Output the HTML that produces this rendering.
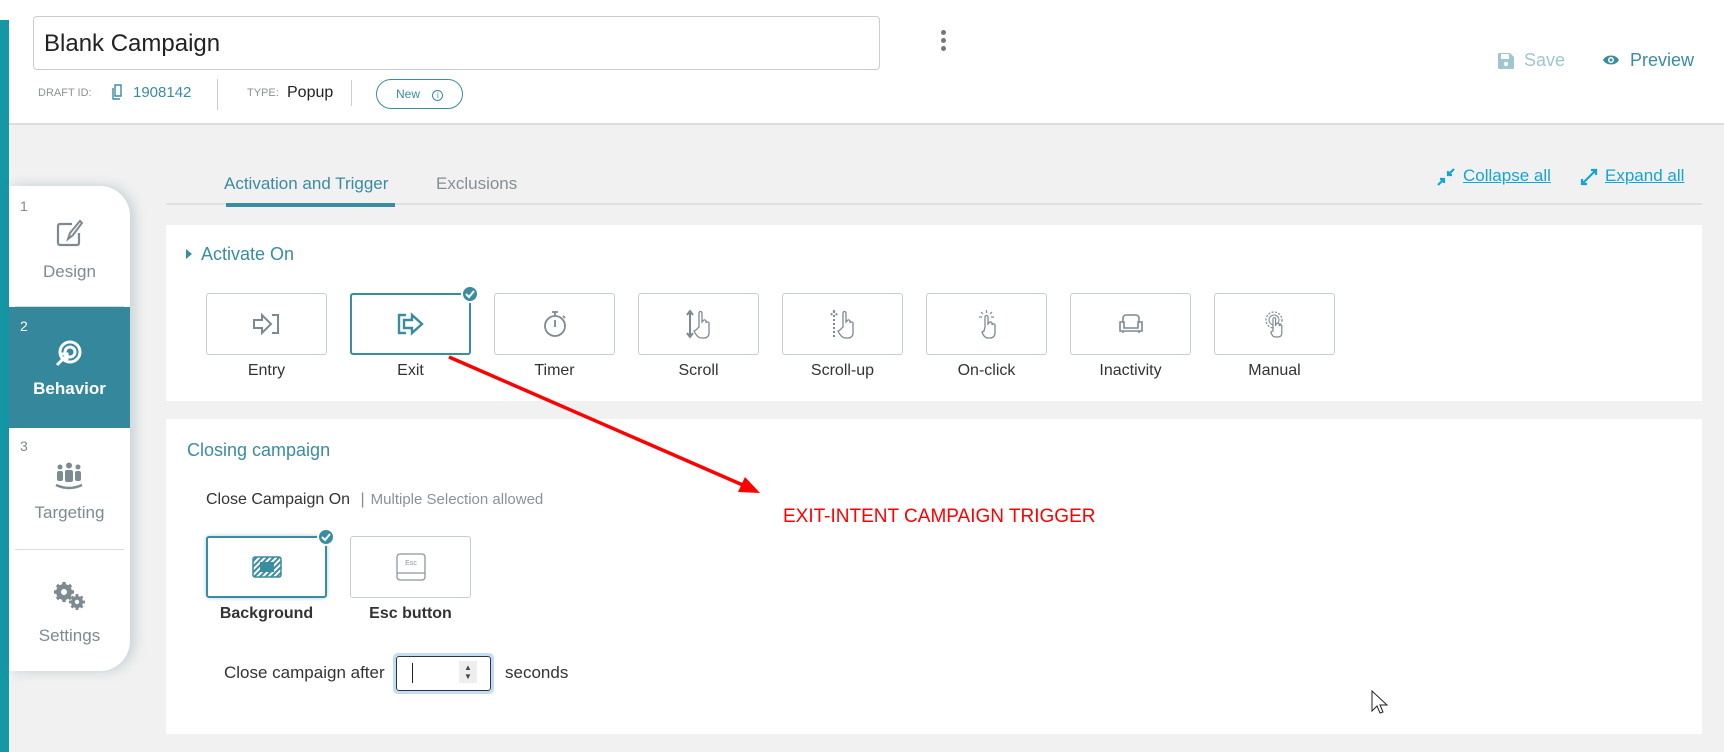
<!DOCTYPE html>
<html><head><meta charset="utf-8"><style>
*{box-sizing:border-box;margin:0;padding:0}
body{width:1724px;height:752px;overflow:hidden;background:#f1f1f1;font-family:"Liberation Sans",sans-serif;position:relative;color:#333}
.abs{position:absolute}
.header{left:0;top:0;width:1724px;height:125px;background:#fff;border-bottom:2px solid #d9dde0}
.strip{left:0;top:20px;width:9px;height:732px;background:#1597a6}
.title{left:33px;top:16px;width:847px;height:54px;border:1px solid #c9cdd0;border-radius:4px;font-size:24px;padding:13px 10px;color:#222}
.sm{font-size:11px;color:#8a9398}
.teal{color:#3a8ca0}
.card{left:9px;top:186px;width:121px;height:485px;background:#fff;border-radius:0 30px 30px 0;box-shadow:4px 0 12px rgba(60,110,130,.25);overflow:hidden}
.nav{position:absolute;left:0;width:121px;text-align:center;font-size:17px;color:#7c8a92}
.num{position:absolute;left:11px;font-size:14px;color:#7c8a92}
.panel{background:#fff;left:166px;width:1536px}
.box{position:absolute;width:121px;height:62px;border:1px solid #c5ced3;border-radius:3px;background:#fff}
.box.sel{border:2px solid #3a8ca0}
.box svg{position:absolute;left:50%;top:50%;transform:translate(-50%,-50%)}
.lbl{position:absolute;width:121px;text-align:center;font-size:16px;color:#333}
.chk{position:absolute;right:-10px;top:-10px;width:18px;height:18px;border-radius:50%;background:#3a8ca0;border:2px solid #fff}
</style></head><body>
<div class="abs header"></div>
<div class="abs strip"></div>
<div class="abs title">Blank Campaign</div>
<div class="abs" style="left:941px;top:30px;width:5px">
<div style="width:5px;height:5px;border-radius:50%;background:#777;margin-bottom:3px"></div>
<div style="width:5px;height:5px;border-radius:50%;background:#777;margin-bottom:3px"></div>
<div style="width:5px;height:5px;border-radius:50%;background:#777"></div></div>
<div class="abs sm" style="left:38px;top:87px">DRAFT ID:</div>
<svg class="abs" style="left:112px;top:84px" width="12" height="16" viewBox="0 0 12 16"><path d="M3 1h6v11H3zM1 4v11h7" fill="none" stroke="#3a8ca0" stroke-width="1.4"/></svg>
<div class="abs teal" style="left:133px;top:84px;font-size:15px">1908142</div>
<div class="abs" style="left:217px;top:79px;width:1px;height:31px;background:#ccc"></div>
<div class="abs sm" style="left:247px;top:87px">TYPE:</div>
<div class="abs" style="left:287px;top:84px;font-size:16px;color:#222">Popup</div>
<div class="abs" style="left:351px;top:80px;width:1px;height:26px;background:#ccc"></div>
<div class="abs teal" style="left:376px;top:79px;width:87px;height:30px;border:1.5px solid #3a8ca0;border-radius:15px;font-size:12px;padding-top:7px;padding-left:19px">New <span style="display:inline-block;width:11px;height:11px;border:1.3px solid #3a8ca0;border-radius:50%;font-size:8px;text-align:center;line-height:9px;margin-left:9px">i</span></div>
<svg class="abs" style="left:1497px;top:52px" width="18" height="18" viewBox="0 0 18 18"><path d="M1 2a1 1 0 0 1 1-1h11l4 4v11a1 1 0 0 1-1 1H2a1 1 0 0 1-1-1z" fill="#9fc6d1"/><rect x="4" y="2" width="8" height="5" fill="#fff"/><circle cx="9" cy="12" r="2.2" fill="#fff"/></svg>
<div class="abs" style="left:1524px;top:50px;font-size:18px;color:#9fc6d1">Save</div>
<svg class="abs" style="left:1602px;top:54px" width="18" height="12" viewBox="0 0 18 12"><path d="M1 6C4 0 14 0 17 6C14 12 4 12 1 6z" fill="#3a8ca0"/><circle cx="9" cy="6" r="3" fill="#fff"/><circle cx="9" cy="6" r="1.5" fill="#3a8ca0"/></svg>
<div class="abs teal" style="left:1630px;top:50px;font-size:18px">Preview</div>

<div class="abs card">
<div class="num" style="top:12px">1</div>
<svg class="abs" style="left:45px;top:33px" width="30" height="30" viewBox="0 0 30 30"><path d="M18 5H6a2 2 0 0 0-2 2v17a2 2 0 0 0 2 2h17a2 2 0 0 0 2-2V14" fill="none" stroke="#7c8a92" stroke-width="2.2"/><path d="M26 2L16 14l-2 6 5-4L28 4z" fill="none" stroke="#7c8a92" stroke-width="2"/></svg>
<div class="nav" style="top:76px">Design</div>
<div class="abs" style="left:6px;top:120px;width:109px;height:2px;background:#d5dde0"></div>
<div class="abs" style="left:0;top:121px;width:121px;height:121px;background:#35879c"></div>
<div class="num" style="top:132px;color:#fff">2</div>
<svg class="abs" style="left:46px;top:153px" width="28" height="28" viewBox="0 0 28 28"><circle cx="15" cy="13" r="10" fill="none" stroke="#fff" stroke-width="3"/><circle cx="15" cy="13" r="5" fill="none" stroke="#fff" stroke-width="3"/><path d="M2 26l9-9M6 15h6v6" stroke="#fff" stroke-width="3" fill="none"/></svg>
<div class="nav" style="top:193px;color:#fff;font-weight:bold">Behavior</div>
<div class="num" style="top:252px">3</div>
<svg class="abs" style="left:45px;top:276px" width="30" height="30" viewBox="0 0 30 30"><circle cx="6" cy="5" r="2.5" fill="#7c8a92"/><circle cx="15" cy="3.5" r="3" fill="#7c8a92"/><circle cx="24" cy="5" r="2.5" fill="#7c8a92"/><rect x="3" y="9" width="6" height="10" rx="2" fill="#7c8a92"/><rect x="11" y="8" width="8" height="12" rx="2" fill="#7c8a92"/><rect x="21" y="9" width="6" height="10" rx="2" fill="#7c8a92"/><path d="M2 23q13 6 26 0" stroke="#7c8a92" stroke-width="2.5" fill="none"/></svg>
<div class="nav" style="top:317px">Targeting</div>
<div class="abs" style="left:6px;top:363px;width:109px;height:1px;background:#d5dde0"></div>
<svg class="abs" style="left:43px;top:395px" width="34" height="30" viewBox="0 0 34 30"><g fill="#7c8a92"><circle cx="12" cy="11" r="8"/><circle cx="25" cy="21" r="6"/></g><g stroke="#7c8a92" stroke-width="3.5"><path d="M12 1v20M2 11h20M5 4l14 14M19 4L5 18"/><path d="M25 13v16M17 21h16M19.5 15.5l11 11M30.5 15.5l-11 11" stroke-width="2.8"/></g><circle cx="12" cy="11" r="3" fill="#fff"/><circle cx="25" cy="21" r="2.2" fill="#fff"/></svg>
<div class="nav" style="top:440px">Settings</div>
</div>

<div class="abs" style="left:166px;top:203px;width:1536px;height:2px;background:#dde0e4"></div>
<div class="abs teal" style="left:224px;top:174px;font-size:17px">Activation and Trigger</div>
<div class="abs" style="left:226px;top:203px;width:169px;height:4px;background:#3a8ca0"></div>
<div class="abs" style="left:436px;top:174px;font-size:17px;color:#858f95">Exclusions</div>
<svg class="abs" style="left:1437px;top:168px" width="18" height="18" viewBox="0 0 18 18"><path d="M17 1l-6 6M11 3v4h4M1 17l6-6M3 11h4v4" stroke="#15a5d4" stroke-width="2.2" fill="none"/></svg>
<div class="abs" style="left:1463px;top:166px;font-size:17px;color:#15a5d4;text-decoration:underline">Collapse all</div>
<svg class="abs" style="left:1580px;top:168px" width="18" height="18" viewBox="0 0 18 18"><path d="M2 16L16 2M11 2h5v5M2 11v5h5" stroke="#15a5d4" stroke-width="2.2" fill="none"/></svg>
<div class="abs" style="left:1605px;top:166px;font-size:17px;color:#15a5d4;text-decoration:underline">Expand all</div>

<div class="abs panel" style="top:225px;height:176px"></div>
<svg class="abs" style="left:186px;top:249px" width="6" height="10"><path d="M0 0l6 5-6 5z" fill="#3a8ca0"/></svg>
<div class="abs teal" style="left:201px;top:244px;font-size:18px">Activate On</div>

<div class="box" style="left:206px;top:293px"><svg width="30" height="24" viewBox="0 0 30 24"><path d="M2 8h8V3l9 9-9 9v-5H2z" fill="none" stroke="#7c8a92" stroke-width="2"/><path d="M20 3h6v18h-6" fill="none" stroke="#7c8a92" stroke-width="2"/></svg></div>
<div class="box sel" style="left:350px;top:293px"><svg width="30" height="24" viewBox="0 0 30 24"><path d="M10 3H3v18h7" fill="none" stroke="#3a8ca0" stroke-width="2.4"/><path d="M8 8h8V3l10 9-10 9v-5H8z" fill="none" stroke="#3a8ca0" stroke-width="2.4"/></svg>
<div class="chk"><svg width="14" height="14" style="left:0;top:0;transform:none;position:absolute" viewBox="0 0 14 14"><path d="M3 7l3 3 5-6" stroke="#fff" stroke-width="2" fill="none"/></svg></div></div>
<div class="box" style="left:494px;top:293px"><svg width="24" height="30" viewBox="0 0 24 30"><circle cx="12" cy="17" r="10" fill="none" stroke="#7c8a92" stroke-width="1.8"/><path d="M12 11v7M9 3h6M12 3v4M20 7l2 2" stroke="#7c8a92" stroke-width="1.8"/></svg></div>
<div class="box" style="left:638px;top:293px"><svg width="30" height="30" viewBox="0 0 30 30"><path d="M6 2v26M3 6l3-4 3 4M3 24l3 4 3-4" stroke="#7c8a92" stroke-width="2" fill="none"/><path d="M15 18V4a1.5 1.5 0 0 1 3 0v9l1-1a1.5 1.5 0 0 1 3 1v1a1.5 1.5 0 0 1 3 1v9c0 3-2 5-5 5h-3c-3 0-5-3-7-7l2-1z" fill="none" stroke="#7c8a92" stroke-width="1.3"/></svg></div>
<div class="box" style="left:782px;top:293px"><svg width="30" height="30" viewBox="0 0 30 30"><path d="M6 28V2M3 6l3-4 3 4" stroke="#7c8a92" stroke-width="2" fill="none" stroke-dasharray="2 2"/><path d="M15 18V4a1.5 1.5 0 0 1 3 0v9l1-1a1.5 1.5 0 0 1 3 1v1a1.5 1.5 0 0 1 3 1v9c0 3-2 5-5 5h-3c-3 0-5-3-7-7l2-1z" fill="none" stroke="#7c8a92" stroke-width="1.3"/></svg></div>
<div class="box" style="left:926px;top:293px"><svg width="24" height="30" viewBox="0 0 24 30"><path d="M10 18V8a1.5 1.5 0 0 1 3 0v7l1-1a1.5 1.5 0 0 1 3 1v1a1.5 1.5 0 0 1 3 1v7c0 3-2 5-5 5h-2c-3 0-5-3-6-6l2-1z" fill="none" stroke="#7c8a92" stroke-width="1.3"/><path d="M11.5 1v3M6 3l2 2M17 3l-2 2M4 8h3M16 8h3" stroke="#7c8a92" stroke-width="1.2"/></svg></div>
<div class="box" style="left:1070px;top:293px"><svg width="28" height="20" viewBox="0 0 28 20"><path d="M6 8V4a3 3 0 0 1 3-3h10a3 3 0 0 1 3 3v4M3 8h4v6h14V8h4v9H3zM6 17v2M22 17v2" fill="none" stroke="#7c8a92" stroke-width="1.6"/></svg></div>
<div class="box" style="left:1214px;top:293px"><svg width="26" height="30" viewBox="0 0 26 30"><circle cx="12" cy="11" r="8" fill="none" stroke="#7c8a92" stroke-width="1.2" stroke-dasharray="2 1.5"/><circle cx="12" cy="11" r="5" fill="none" stroke="#7c8a92" stroke-width="1"/><path d="M11 22V10a1.3 1.3 0 0 1 2.6 0v6l1-1a1.3 1.3 0 0 1 2.6 1v1a1.3 1.3 0 0 1 2.6 1v6c0 3-2 4-4 4h-2c-3 0-4-2-5-5l2-1z" fill="#fff" stroke="#7c8a92" stroke-width="1.2"/></svg></div>

<div class="lbl" style="left:206px;top:362px">Entry</div>
<div class="lbl" style="left:350px;top:362px">Exit</div>
<div class="lbl" style="left:494px;top:362px">Timer</div>
<div class="lbl" style="left:638px;top:362px">Scroll</div>
<div class="lbl" style="left:782px;top:362px">Scroll-up</div>
<div class="lbl" style="left:926px;top:362px">On-click</div>
<div class="lbl" style="left:1070px;top:362px">Inactivity</div>
<div class="lbl" style="left:1214px;top:362px">Manual</div>

<div class="abs panel" style="top:419px;height:315px"></div>
<div class="abs teal" style="left:187px;top:440px;font-size:18px">Closing campaign</div>
<div class="abs" style="left:206px;top:491px;font-size:16px;color:#333">Close Campaign On <span style="color:#888;margin:0 6px">|</span><span style="color:#8a9398;font-size:15px">Multiple Selection allowed</span></div>
<div class="box sel" style="left:206px;top:536px;box-shadow:0 0 4px rgba(58,140,160,.4)"><svg width="30" height="24" viewBox="0 0 30 24"><defs><pattern id="h" width="4" height="4" patternUnits="userSpaceOnUse" patternTransform="rotate(45)"><rect width="2" height="4" fill="#3a8ca0"/></pattern></defs><rect x="1" y="2" width="28" height="20" rx="2" fill="url(#h)" stroke="#3a8ca0" stroke-width="1.5"/><rect x="8" y="7" width="14" height="10" fill="#3a8ca0"/></svg>
<div class="chk"><svg width="14" height="14" style="left:0;top:0;transform:none;position:absolute" viewBox="0 0 14 14"><path d="M3 7l3 3 5-6" stroke="#fff" stroke-width="2" fill="none"/></svg></div></div>
<div class="box" style="left:350px;top:536px"><svg width="30" height="28" viewBox="0 0 30 28"><rect x="1" y="1" width="28" height="26" rx="3" fill="none" stroke="#8a979e" stroke-width="1.3"/><path d="M1 20h28" stroke="#8a979e" stroke-width="1.3"/><text x="15" y="12" font-size="7" text-anchor="middle" fill="#8a979e" font-family="Liberation Sans">Esc</text></svg></div>
<div class="lbl" style="left:206px;top:605px;font-weight:bold">Background</div>
<div class="lbl" style="left:350px;top:605px;font-weight:bold">Esc button</div>

<div class="abs" style="left:224px;top:663px;font-size:17px;color:#333">Close campaign after</div>
<div class="abs" style="left:393px;top:653px;width:101px;height:41px;border:3px solid #c2dcf7;border-radius:5px"></div>
<div class="abs" style="left:396px;top:656px;width:95px;height:35px;border:1.5px solid #333;border-radius:3px;background:#fff"></div>
<div class="abs" style="left:412px;top:663px;width:1px;height:20px;background:#222"></div>
<div class="abs" style="left:459px;top:661px;width:18px;height:22px;background:#eee;font-size:8px;color:#444;text-align:center;line-height:9px;padding-top:2px">▲<br>▼</div>
<div class="abs" style="left:505px;top:663px;font-size:17px;color:#333">seconds</div>

<svg class="abs" style="left:0;top:0" width="1724" height="752"><line x1="449" y1="357" x2="745" y2="486" stroke="#f00" stroke-width="3.5"/><path d="M760 493l-22-1 7-15z" fill="#f00"/>
<path d="M1372 691v20l5-5 3 7 3-1-3-7h7z" fill="#fff" stroke="#222" stroke-width="1"/></svg>
<div class="abs" style="left:783px;top:506px;font-size:19px;color:#f00">EXIT-INTENT CAMPAIGN TRIGGER</div>
</body></html>
